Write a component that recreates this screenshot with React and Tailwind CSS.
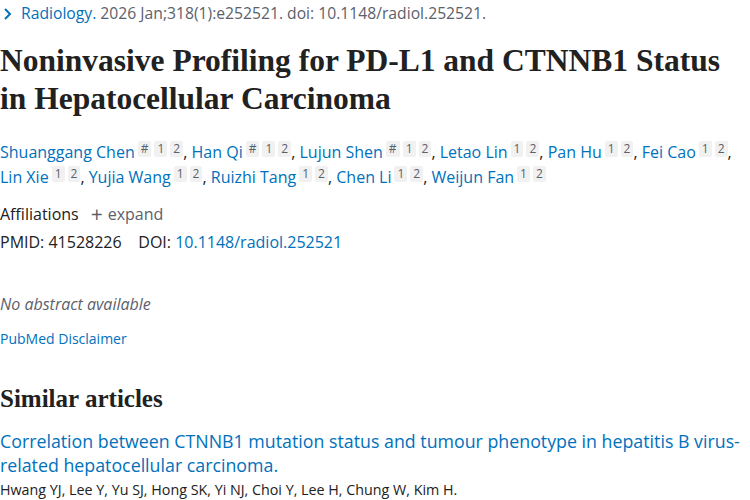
import React from "react";

const authors = [
  { name: "Shuanggang Chen", eq: true },
  { name: "Han Qi", eq: true },
  { name: "Lujun Shen", eq: true },
  { name: "Letao Lin" },
  { name: "Pan Hu" },
  { name: "Fei Cao" },
  { name: "Lin Xie" },
  { name: "Yujia Wang" },
  { name: "Ruizhi Tang" },
  { name: "Chen Li" },
  { name: "Weijun Fan" },
];

const Sup = ({ children }) => (
  <span className="inline-block bg-[#f1f1f1] text-[#5b616b] text-[12px] leading-[16px] px-[3px] ml-[3px] rounded-[2px] align-[5px]">
    {children}
  </span>
);

const App = () => {
  return (
    <div
      className="w-[750px] h-[500px] overflow-hidden bg-white text-[#212121]"
      style={{ fontFamily: '"Open Sans", "Noto Sans", sans-serif' }}
    >
      {/* CITATION */}
      <div className="flex items-center h-[27px] text-[15.7px] text-[#5b616b]">
        <svg width="14" height="14" viewBox="0 0 14 14" className="ml-[1px] mr-[6px]">
          <path d="M4 2l5 5-5 5" fill="none" stroke="#0071bc" strokeWidth="2" />
        </svg>
        <span className="text-[#0071bc]">Radiology.</span>
        <span>&nbsp;2026 Jan;318(1):e252521. doi: 10.1148/radiol.252521.</span>
      </div>

      {/* TITLE */}
      <h1
        className="mt-[15px] text-[31.5px] leading-[38px] font-bold text-[#212121] whitespace-nowrap"
        style={{ fontFamily: '"Liberation Serif", serif' }}
      >
        Noninvasive Profiling for PD-L1 and CTNNB1 Status
        <br />
        in Hepatocellular Carcinoma
      </h1>

      {/* AUTHORS */}
      <div className="mt-[22px] text-[16px] leading-[25px] pr-[10px]">
        {authors.map((a, i) => (
          <span key={a.name}>
            <span className="text-[#0071bc]">{a.name}</span>
            {a.eq && <Sup>#</Sup>}
            <Sup>1</Sup>
            <Sup>2</Sup>
            {i < authors.length - 1 && <span className="text-[#212121]">, </span>}
          </span>
        ))}
      </div>

      {/* AFFILIATIONS */}
      <div className="mt-[11px] text-[16px] leading-[27px] flex items-center">
        <span>Affiliations</span>
        <span className="ml-[12px] text-[#5b616b] flex items-center">
          <span className="text-[21px] mr-[5px] leading-none">+</span>expand
        </span>
      </div>
      <div className="text-[16px] leading-[28px]">
        PMID: 41528226&nbsp;&nbsp;&nbsp; DOI:{" "}
        <span className="text-[#0071bc]">10.1148/radiol.252521</span>
      </div>

      {/* ABSTRACT */}
      <div className="mt-[37px] text-[16px] leading-[22px] italic text-[#5b616b]">No abstract available</div>
      <div className="mt-[14px] text-[14px] leading-[20px] text-[#0071bc]">PubMed Disclaimer</div>

      {/* SIMILAR */}
      <h2
        className="mt-[35px] text-[25px] leading-[30px] font-bold"
        style={{ fontFamily: '"Liberation Serif", serif' }}
      >
        Similar articles
      </h2>
      <div className="mt-[15px] text-[17.8px] leading-[24px] text-[#0071bc] pr-[4px]">
        Correlation between CTNNB1 mutation status and tumour phenotype in hepatitis B virus-related hepatocellular carcinoma.
      </div>
      <div className="mt-[2px] text-[14.3px] text-[#212121]">
        Hwang YJ, Lee Y, Yu SJ, Hong SK, Yi NJ, Choi Y, Lee H, Chung W, Kim H.
      </div>
    </div>
  );
};

export default App;
